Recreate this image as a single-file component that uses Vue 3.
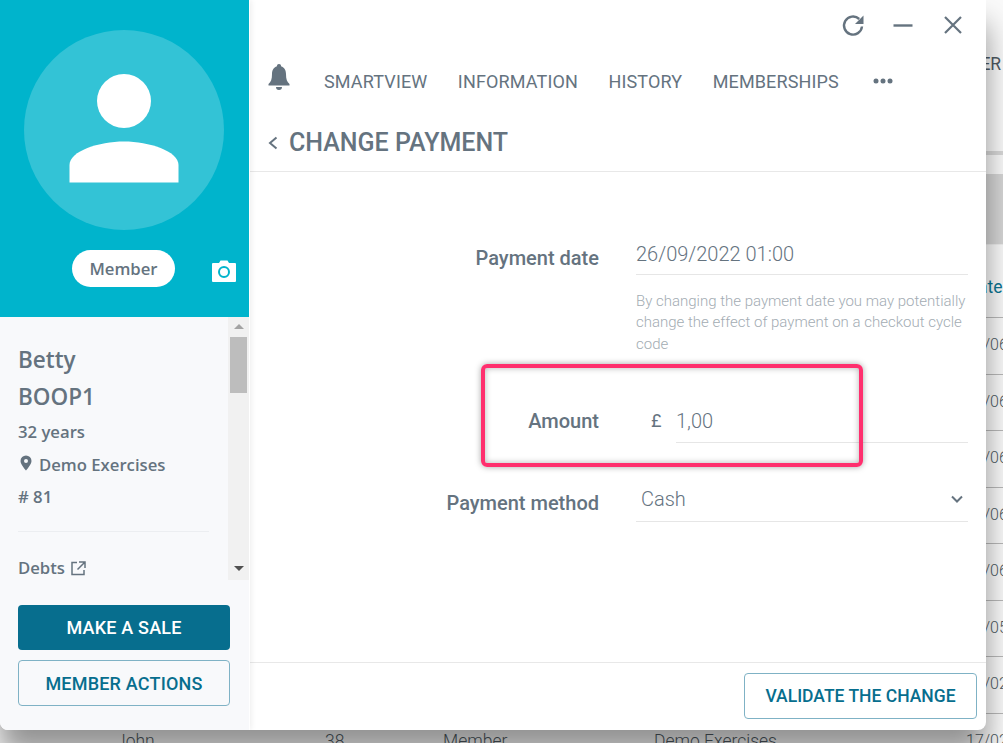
<script setup>
const rows = [
  { date: '17/06/2022' }, { date: '17/06/2022' }, { date: '17/06/2022' }, { date: '17/06/2022' },
  { date: '17/06/2022' }, { date: '17/05/2022' }, { date: '17/02/2022' },
  { name: 'John', age: '38', role: 'Member', club: 'Demo Exercises', date: '17/02/2022' }
]
const tabs = ['SMARTVIEW', 'INFORMATION', 'HISTORY', 'MEMBERSHIPS']
</script>

<template>
  <div class="screen">
    <div class="page">
      <div class="page-top"><span>MEMBER</span></div>
      <div class="page-band"></div>
      <div class="page-head"><span>Start date</span></div>
      <div v-for="(r, i) in rows" :key="i" class="page-row">
        <span>{{ r.name }}</span><span>{{ r.age }}</span><span>{{ r.role }}</span><span>{{ r.club }}</span><span class="date">{{ r.date }}</span>
      </div>
    </div>

    <div class="modal">
      <aside class="side">
        <div class="hero">
          <div class="avatar">
            <svg width="110" height="120" viewBox="0 0 110 120">
              <circle cx="55" cy="28" r="27" fill="#fff" />
              <path d="M.5 109.500V92C.5 78 30 68.500 55 68.500S109.500 78 109.500 92v17.500z" fill="#fff" />
            </svg>
          </div>
          <div class="badge-row">
            <span class="pill">Member</span>
            <svg class="camera" width="26" height="24" viewBox="0 0 26 24">
              <path d="M2 4h6l1.500-2.500h7L18 4h6a1 1 0 0 1 1 1v17a1 1 0 0 1-1 1H2a1 1 0 0 1-1-1V5a1 1 0 0 1 1-1z" fill="#fff" />
              <circle cx="13" cy="13" r="5" fill="none" stroke="#00b4cc" stroke-width="2" />
            </svg>
          </div>
        </div>
        <div class="info">
          <div class="scroll">
            <div class="details">
              <div class="name">Betty</div>
              <div class="name second">BOOP1</div>
              <div class="meta age">32 years</div>
              <div class="meta loc">
                <svg width="12" height="16" viewBox="0 0 12 16"><path fill-rule="evenodd" d="M6 .5A5.500 5.500 0 0 0 .5 6C.5 9.500 6 15.500 6 15.500S11.500 9.500 11.500 6A5.500 5.500 0 0 0 6 .5zM6 8a2 2 0 1 1 0-4 2 2 0 0 1 0 4z" fill="#65737f" /></svg>
                Demo Exercises
              </div>
              <div class="meta num"># 81</div>
              <div class="rule"></div>
              <div class="meta debts">
                Debts
                <svg width="15" height="15" viewBox="0 0 15 15" fill="none" stroke="#65737f" stroke-width="1.500"><path d="M6 1.500H1v12h12V9M8 1h6v6M14 1L6.500 8.500" /></svg>
              </div>
            </div>
            <div class="bar">
              <span class="arrow up"></span>
              <span class="thumb"></span>
              <span class="arrow down"></span>
            </div>
          </div>
          <div class="actions">
            <button class="btn solid">MAKE A SALE</button>
            <button class="btn outline">MEMBER ACTIONS</button>
          </div>
        </div>
      </aside>

      <main class="main">
        <header class="head">
          <div class="win">
            <svg class="refresh" width="24" height="24" viewBox="0 0 24 24"><path d="M21 13.500a9 9 0 1 1-2.800-7.500" fill="none" stroke="#65737f" stroke-width="2.400" /><path d="M22.500 2.500V11H14z" fill="#65737f" /></svg>
            <svg width="20" height="24" viewBox="0 0 20 24"><path d="M.5 12.500h19" stroke="#65737f" stroke-width="2.400" /></svg>
            <svg width="20" height="24" viewBox="0 0 20 24"><path d="M2 4l16 16M18 4L2 20" stroke="#65737f" stroke-width="2.200" /></svg>
          </div>
          <nav class="tabs">
            <svg class="bell" width="22" height="26" viewBox="0 0 22 26"><path d="M11 0a2 2 0 0 1 2 2.300C16.500 3.300 18 6.500 18 10c0 5 1 8 3.500 10v1.500H.5V20C3 18 4 15 4 10c0-3.500 1.500-6.700 5-7.700A2 2 0 0 1 11 0zM8 23h6a3 3 0 0 1-6 0z" fill="#65737f" /></svg>
            <a v-for="t in tabs" :key="t" class="tab">{{ t }}</a>
            <svg class="dots" width="20" height="6" viewBox="0 0 20 6"><circle cx="3" cy="3" r="2.500" fill="#65737f" /><circle cx="10" cy="3" r="2.500" fill="#65737f" /><circle cx="17" cy="3" r="2.500" fill="#65737f" /></svg>
          </nav>
          <div class="title">
            <svg width="10" height="14" viewBox="0 0 10 14"><path d="M8.500 1.500L2 7l6.500 5.500" fill="none" stroke="#65737f" stroke-width="2" /></svg>
            <h1>CHANGE PAYMENT</h1>
          </div>
        </header>

        <section class="form">
          <div class="row first">
            <label>Payment date</label>
            <div class="field">26/09/2022 01:00</div>
          </div>
          <div class="help">By changing the payment date you may potentially change the effect of payment on a checkout cycle code</div>
          <div class="row amount">
            <label>Amount</label>
            <div class="money"><span class="cur">£</span><div class="field">1,00</div></div>
          </div>
          <div class="row method">
            <label>Payment method</label>
            <div class="field select">
              <span>Cash</span>
              <svg width="12" height="8" viewBox="0 0 12 8"><path d="M1 1.500l5 5 5-5" fill="none" stroke="#65737f" stroke-width="2" /></svg>
            </div>
          </div>
          <div class="mark"></div>
        </section>

        <footer class="foot">
          <button class="btn outline validate">VALIDATE THE CHANGE</button>
        </footer>
      </main>
    </div>
  </div>
</template>

<style scoped>
.screen {
  position: relative;
  width: 1003px;
  height: 743px;
  overflow: hidden;
  background: #fafafa;
  font-family: Roboto, "Liberation Sans", sans-serif;
  color: #65737f;
}
.page {
  position: absolute;
  inset: 0;
  font-weight: 300;
  font-size: 17.500px;
  color: #4f5a63;
}
.page-top {
  height: 155px;
  padding: 54px 0 0 929px;
  font-weight: 400;
  white-space: nowrap;
  border-bottom: 4px solid #d8d8d8;
  box-sizing: border-box;
}
.page-band { height: 70px; margin-top: 19px; background: #d6d6d6; }
.page-head {
  height: 73px;
  padding: 32px 0 0 926px;
  box-sizing: border-box;
  font-weight: 400;
  color: #0b7593;
  border-top: 1px solid #eee;
  white-space: nowrap;
}
.page-row {
  display: grid;
  grid-template-columns: 209px 118px 211px 312px auto;
  padding-left: 116px;
  height: 56.500px;
  line-height: 54px;
  border-top: 1px solid #b9b9b9;
  box-sizing: border-box;
  white-space: nowrap;
}
.date { font-size: 16px; }

.modal {
  position: absolute;
  left: 0;
  top: 0;
  width: 986px;
  height: 730px;
  display: flex;
  background: #fff;
  border-radius: 0 0 8px 8px;
  overflow: hidden;
  box-shadow: 0 24px 30px rgba(0, 0, 0, 0.42);
}
.side {
  width: 250px;
  flex: none;
  display: flex;
  flex-direction: column;
  box-shadow: 1px 0 6px rgba(0, 0, 0, 0.08);
  z-index: 1;
}
.hero {
  height: 317px;
  width: 249px;
  background: #00b4cc;
  box-sizing: border-box;
  padding-top: 30px;
}
.avatar {
  width: 200px;
  height: 200px;
  margin-left: 24px;
  border-radius: 50%;
  background: rgba(255, 255, 255, 0.2);
  display: flex;
  justify-content: center;
  padding-top: 42.500px;
  box-sizing: border-box;
}
.badge-row {
  display: flex;
  align-items: center;
  margin: 20px 0 0 72px;
}
.pill {
  width: 103px;
  height: 37px;
  border-radius: 19px;
  background: #fff;
  display: flex;
  align-items: center;
  justify-content: center;
  font: 600 16.700px "Open Sans", sans-serif;
  color: #65737f;
}
.camera { margin: 5px 0 0 36px; }
.info {
  flex: 1;
  width: 249px;
  background: #f8f9fb;
}
.scroll { display: flex; height: 263px; }
.details { width: 228px; padding: 29px 19px 0 18px; box-sizing: border-box; }
.name { font: 600 22.500px/28px "Open Sans", sans-serif; color: #65737f; }
.second { margin-top: 9px; }
.meta {
  font: 600 16.700px/22px "Open Sans", sans-serif;
  color: #65737f;
  white-space: nowrap;
}
.age { margin-top: 10px; }
.loc { margin-top: 11px; display: flex; align-items: center; gap: 7px; }
.loc svg { margin: -5px 0 0 2px; }
.num { margin-top: 10px; }
.rule { height: 1px; background: #eceef1; margin-top: 23px; }
.debts { margin-top: 25px; display: flex; align-items: center; gap: 6px; }
.bar {
  width: 21px;
  background: #f1f1f1;
  display: flex;
  flex-direction: column;
  align-items: center;
  position: relative;
}
.arrow { width: 0; height: 0; border-left: 5px solid transparent; border-right: 5px solid transparent; }
.up { border-bottom: 5px solid #a3a3a3; margin-top: 7px; }
.thumb { width: 17px; height: 56px; background: #bdbdbd; margin: 8px 0 0 -1px; }
.down { border-top: 5px solid #505050; margin-top: auto; margin-bottom: 9px; }
.actions {
  padding: 25px 19px 0 18px;
  display: flex;
  flex-direction: column;
  gap: 10px;
}
.btn {
  font: 500 18px Roboto, sans-serif;
  border-radius: 4px;
  box-sizing: border-box;
  padding: 0;
  height: 46px;
  letter-spacing: 0.2px;
}
.solid { background: #076e8e; color: #fff; border: 0; height: 45px; }
.outline { background: #fff; color: #076e8e; border: 1px solid #7fb2c5; }
.info .outline { background: transparent; }

.main {
  flex: 1;
  min-width: 0;
  display: flex;
  flex-direction: column;
}
.head { height: 172px; box-sizing: border-box; border-bottom: 1px solid #e8e8e8; flex: none; }
.win {
  display: flex;
  justify-content: flex-end;
  align-items: center;
  height: 50px;
  padding-right: 23px;
  gap: 30px;
}
.refresh { margin-right: -2px; }
.tabs {
  display: flex;
  align-items: center;
  height: 32px;
  margin-top: 16px;
  padding-left: 18px;
  gap: 30.400px;
}
.bell { margin: -10px 3.600px 0 0; }
.tab { font-size: 18px; letter-spacing: 0.15px; color: #65737f; font-weight: 400; white-space: nowrap; margin-top: -1px; }
.dots { margin: -2px 0 0 4px; }
.title { display: flex; align-items: center; gap: 11px; padding: 29px 0 0 18px; }
h1 { margin: 0; font-size: 25px; font-weight: 500; color: #65737f; line-height: 32px; white-space: nowrap; }

.form { flex: 1; position: relative; padding-top: 62px; }
.row {
  display: grid;
  grid-template-columns: 349px 332px;
  column-gap: 37px;
  align-items: end;
}
label { text-align: right; font-size: 20px; font-weight: 500; color: #65737f; white-space: nowrap; }
.first label { padding-bottom: 5px; }
.field {
  font-size: 20px;
  font-weight: 300;
  color: #65737f;
  height: 41px;
  line-height: 40px;
  box-sizing: border-box;
  border-bottom: 1px solid #e6e6e6;
}
.help {
  margin: 16px 0 0 386px;
  width: 332px;
  font-size: 15px;
  line-height: 21.300px;
  font-weight: 300;
  color: #a3acb3;
}
.amount { margin-top: 45.600px; }
.amount label { padding-bottom: 10px; }
.money { display: flex; align-items: flex-end; }
.cur { width: 40px; box-sizing: border-box; padding: 0 0 12px 15px; font-size: 18px; font-weight: 400; }
.money .field { flex: 1; height: 43px; line-height: 43px; }
.method { margin-top: 38px; }
.method label { padding-bottom: 7px; }
.select { display: flex; justify-content: space-between; align-items: center; padding: 0 5px 4px 5px; line-height: normal; }
.mark {
  position: absolute;
  left: 231px;
  top: 192px;
  width: 382px;
  height: 103px;
  box-sizing: border-box;
  border: 4px solid #ff2f6e;
  border-radius: 6px;
  box-shadow: 0 0 6px rgba(0, 0, 0, 0.35), inset 0 0 6px rgba(0, 0, 0, 0.3);
}
.foot {
  height: 68px;
  flex: none;
  box-sizing: border-box;
  border-top: 1px solid #e8e8e8;
  display: flex;
  justify-content: flex-end;
  align-items: flex-start;
  padding: 10px 9px 0 0;
}
.validate { width: 233px; font-size: 17.500px; letter-spacing: 0; }
</style>
